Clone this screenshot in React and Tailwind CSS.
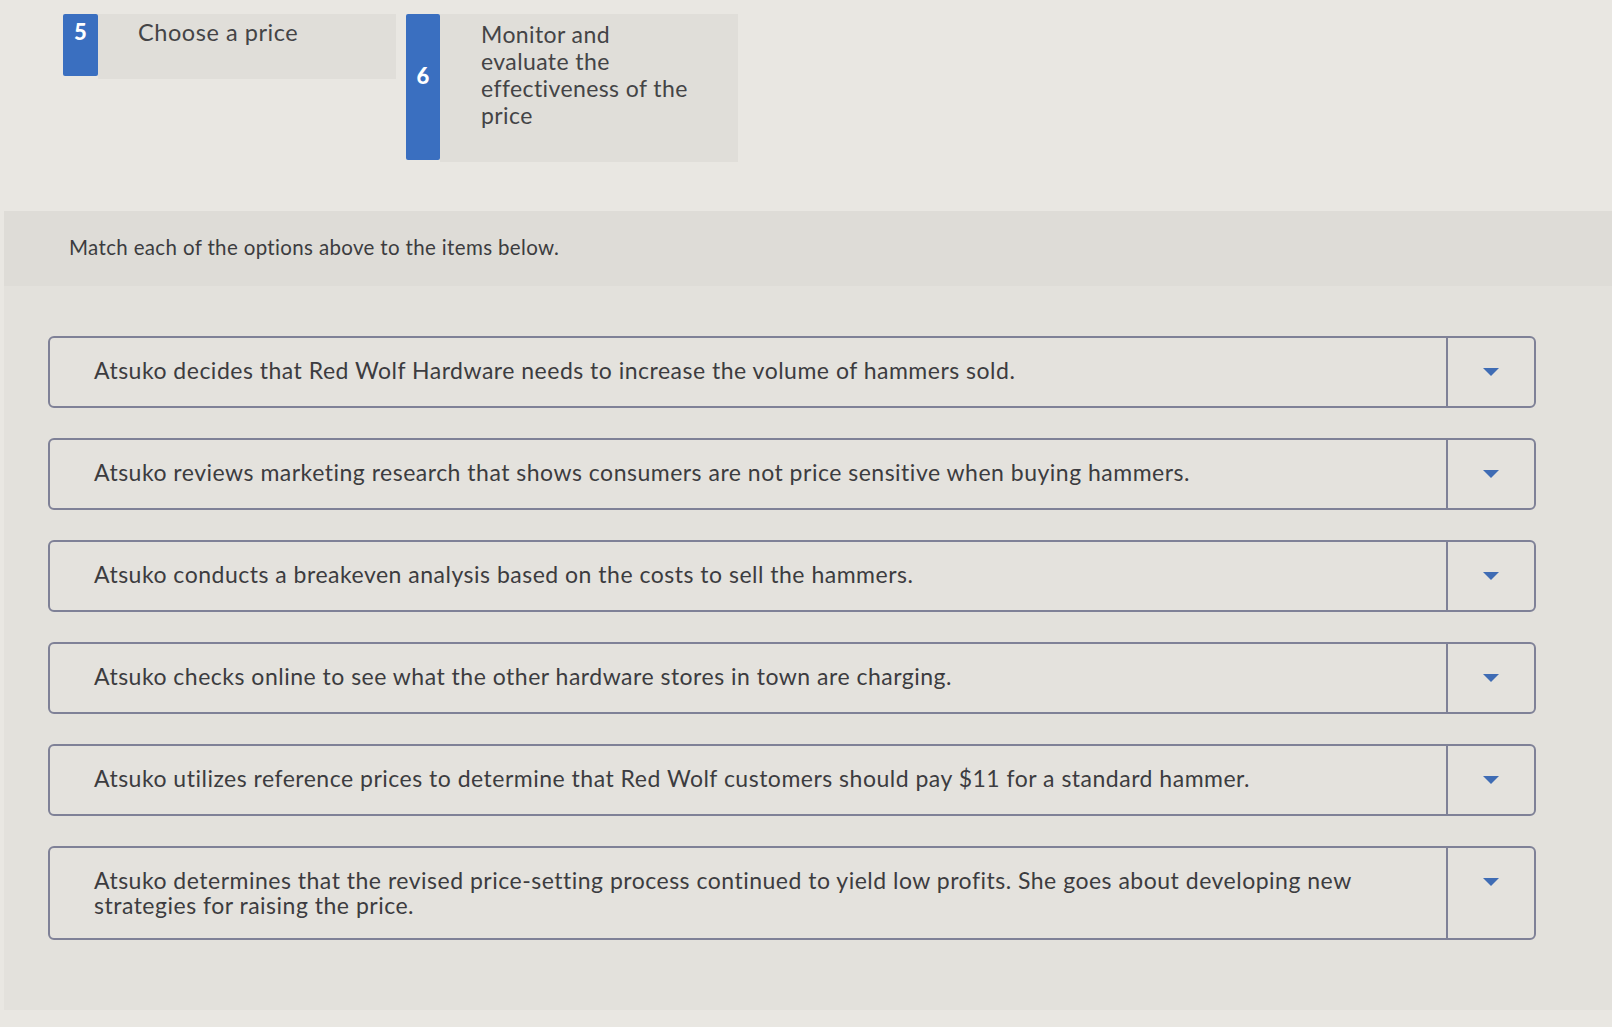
import React from "react";

const items = [
  "Atsuko decides that Red Wolf Hardware needs to increase the volume of hammers sold.",
  "Atsuko reviews marketing research that shows consumers are not price sensitive when buying hammers.",
  "Atsuko conducts a breakeven analysis based on the costs to sell the hammers.",
  "Atsuko checks online to see what the other hardware stores in town are charging.",
  "Atsuko utilizes reference prices to determine that Red Wolf customers should pay $11 for a standard hammer.",
  "Atsuko determines that the revised price-setting process continued to yield low profits. She goes about developing new strategies for raising the price.",
];

const Caret = () => (
  <svg width="18" height="10" viewBox="0 0 18 10">
    <path d="M1 1 H17 L9 9 Z" fill="#3f6cb4" />
  </svg>
);

const MatchRow = ({ text }) => (
  <div className="flex min-h-[72px] w-[1488px] rounded-[6px] border-2 border-[#7f8197] bg-[#e4e2dd]">
    <div className="flex flex-1 items-start py-[20px] pl-[44px] pr-[90px] text-[23px] leading-[25px] tracking-[0.5px] text-[#3c3c3f]">
      {text}
    </div>
    <div className="flex w-[88px] items-start justify-center border-l-2 border-[#7f8197] pt-[29px]">
      <Caret />
    </div>
  </div>
);

export default function App() {
  return (
    <div
      className="h-[1027px] w-[1612px] overflow-hidden bg-[#e9e7e2]"
      style={{ fontFamily: "Lato, 'Open Sans', sans-serif" }}
    >
      {/* Options */}
      <div className="flex h-[211px] items-start gap-[10px] pl-[63px] pt-[14px]">
        <div className="flex">
          <div className="flex h-[62px] w-[35px] justify-center rounded-[2px] bg-[#3a6fc0] pt-[1px] text-[22px] font-black text-white">
            5
          </div>
          <div className="h-[65px] w-[298px] bg-[#e0ded9] pl-[40px] pt-[5px] text-[23.5px] leading-[27px] tracking-[0.55px] text-[#444446]">
            Choose a price
          </div>
        </div>
        <div className="flex">
          <div className="flex h-[146px] w-[34px] items-center justify-center rounded-[2px] bg-[#3a6fc0] pb-[24px] text-[22px] font-black text-white">
            6
          </div>
          <div className="h-[148px] w-[298px] bg-[#e0ded9] pl-[41px] pt-[7px] text-[23px] leading-[27px] tracking-[0.4px] text-[#444446]">
            Monitor and
            <br />
            evaluate the
            <br />
            effectiveness of the
            <br />
            price
          </div>
        </div>
      </div>

      {/* Question panel */}
      <div className="ml-[4px] h-[799px] bg-[#e3e1dc]">
        <div className="h-[75px] bg-[#dedcd7] pl-[65px] pt-[21px] text-[20.5px] tracking-[0.35px] text-[#3c3c3f]">
          Match each of the options above to the items below.
        </div>
        <div className="flex flex-col gap-[30px] pl-[44px] pt-[50px]">
          {items.map((t, i) => (
            <MatchRow key={i} text={t} />
          ))}
        </div>
      </div>
    </div>
  );
}
